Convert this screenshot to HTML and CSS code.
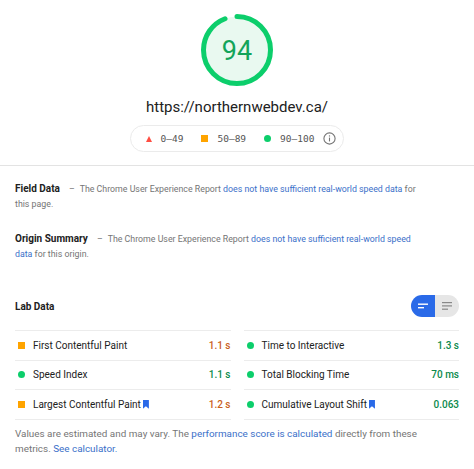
FILE: index.html
```html
<!DOCTYPE html>
<html>
<head>
    <title>PageSpeed Report</title>
    <link rel="stylesheet" href="styles.css">
</head>
<body>
    <div class="summary">
        <svg class="gauge" width="76" height="76" viewBox="0 0 76 76">
            <circle cx="38" cy="38" r="33.5" fill="#e9f9f0"/>
            <circle cx="38" cy="38" r="33.5" fill="none" stroke="#0cce6b" stroke-width="5"
                    stroke-linecap="round" stroke-dasharray="197.9 210.5" transform="rotate(-90 38 38)"/>
            <text x="38" y="47.5" text-anchor="middle" class="gauge-score">94</text>
        </svg>
        <div class="url">https://northernwebdev.ca/</div>
        <div class="legend">
            <span class="legend-item"><span class="shape triangle"></span>0–49</span>
            <span class="legend-item"><span class="shape square"></span>50–89</span>
            <span class="legend-item"><span class="shape dot"></span>90–100</span>
            <svg class="info" width="13" height="13" viewBox="0 0 13 13">
                <circle cx="6.5" cy="6.5" r="5.6" fill="none" stroke="#757575" stroke-width="1.1"/>
                <rect x="5.95" y="5.6" width="1.1" height="3.8" fill="#757575"/>
                <circle cx="6.5" cy="3.9" r="0.7" fill="#757575"/>
            </svg>
        </div>
    </div>

    <div class="content">
        <div class="field-block">
            <span class="block-title">Field Data</span><span class="dash">–</span>The Chrome User Experience Report <a href="#">does not have sufficient real-world speed data</a> for this page.
        </div>

        <div class="field-block origin">
            <span class="block-title">Origin Summary</span><span class="dash">–</span>The Chrome User Experience Report <a href="#">does not have sufficient real-world speed data</a> for this origin.
        </div>

        <div class="lab-header">
            <span class="block-title">Lab Data</span>
            <div class="toggle">
                <span class="toggle-half active">
                    <svg width="12" height="8" viewBox="0 0 12 8">
                        <rect x="1" y="1.5" width="10" height="1.4" fill="#fff"/>
                        <rect x="1" y="5" width="6" height="1.4" fill="#fff"/>
                    </svg>
                </span>
                <span class="toggle-half">
                    <svg width="12" height="10" viewBox="0 0 12 10">
                        <rect x="1" y="1" width="10" height="1.2" fill="#888"/>
                        <rect x="1" y="4.3" width="10" height="1.2" fill="#888"/>
                        <rect x="1" y="7.6" width="6" height="1.2" fill="#888"/>
                    </svg>
                </span>
            </div>
        </div>

        <div class="metrics">
            <div class="metric-col">
                <div class="metric">
                    <span class="shape square"></span>
                    <span class="metric-name">First Contentful Paint</span>
                    <span class="metric-value average">1.1 s</span>
                </div>
                <div class="metric">
                    <span class="shape dot"></span>
                    <span class="metric-name">Speed Index</span>
                    <span class="metric-value pass">1.1 s</span>
                </div>
                <div class="metric">
                    <span class="shape square"></span>
                    <span class="metric-name">Largest Contentful Paint<span class="flag"></span></span>
                    <span class="metric-value average">1.2 s</span>
                </div>
            </div>
            <div class="metric-col">
                <div class="metric">
                    <span class="shape dot"></span>
                    <span class="metric-name">Time to Interactive</span>
                    <span class="metric-value pass">1.3 s</span>
                </div>
                <div class="metric">
                    <span class="shape dot"></span>
                    <span class="metric-name">Total Blocking Time</span>
                    <span class="metric-value pass">70 ms</span>
                </div>
                <div class="metric">
                    <span class="shape dot"></span>
                    <span class="metric-name">Cumulative Layout Shift<span class="flag"></span></span>
                    <span class="metric-value pass">0.063</span>
                </div>
            </div>
        </div>

        <p class="note">
            Values are estimated and may vary. The <a href="#">performance score is calculated</a> directly from these metrics. <a href="#">See calculator.</a>
        </p>
    </div>
</body>
</html>
```

FILE: styles.css
```css
body {
    margin: 0;
    font-family: Roboto, 'Liberation Sans', sans-serif;
    background: #fff;
    color: #212121;
}

a {
    color: #3a6fc9;
    text-decoration: none;
}

.summary {
    display: flex;
    flex-direction: column;
    align-items: center;
    padding-top: 12px;
    border-bottom: 1px solid #e3e3e3;
    padding-bottom: 13px;
}

.gauge {
    display: block;
}

.gauge-score {
    font-family: Roboto, 'Liberation Sans', sans-serif;
    font-size: 27px;
    fill: #13a45a;
}

.url {
    margin-top: 9px;
    font-size: 15px;
    line-height: 20px;
    color: #212121;
}

.legend {
    margin-top: 8px;
    display: flex;
    align-items: center;
    gap: 18px;
    height: 25px;
    padding: 0 7px 0 15px;
    border: 1px solid #ebebeb;
    border-radius: 14px;
    font-family: 'DejaVu Sans Mono', 'Liberation Mono', monospace;
    font-size: 9.5px;
    color: #555;
}

.legend-item {
    display: flex;
    align-items: center;
    gap: 9px;
}

.shape {
    display: inline-block;
    flex-shrink: 0;
}

.triangle {
    width: 0;
    height: 0;
    border-left: 3px solid transparent;
    border-right: 3px solid transparent;
    border-bottom: 6px solid #ff4e42;
}

.square {
    width: 7px;
    height: 7px;
    background: #ffa400;
}

.dot {
    width: 7px;
    height: 7px;
    border-radius: 50%;
    background: #0cce6b;
}

.info {
    display: block;
    margin-left: -9px;
}

.content {
    padding: 0 15px;
}

.field-block {
    margin-top: 15px;
    font-size: 8.8px;
    line-height: 15px;
    color: #757575;
    padding-right: 37px;
}

.field-block.origin {
    margin-top: 19px;
}

.block-title {
    font-size: 10px;
    font-weight: bold;
    color: #212121;
}

.dash {
    margin: 0 5px 0 9px;
}

.lab-header {
    margin-top: 32px;
    display: flex;
    justify-content: space-between;
    align-items: center;
    height: 24px;
}

.toggle {
    display: flex;
    height: 22px;
    border-radius: 11px;
    overflow: hidden;
}

.toggle-half {
    width: 24px;
    display: flex;
    align-items: center;
    justify-content: center;
    background: #e6e6e6;
}

.toggle-half.active {
    background: #2a6ae8;
}

.toggle-half svg {
    display: block;
}

.metrics {
    margin-top: 12px;
    display: grid;
    grid-template-columns: 1fr 1fr;
    gap: 13px;
}

.metric {
    display: flex;
    align-items: center;
    height: 28.5px;
    border-top: 1px solid #ececec;
    font-size: 10px;
    padding: 0 0 0 3px;
}

.metric-col .metric:last-child {
    border-bottom: 1px solid #ececec;
}

.metric .shape {
    margin-right: 8px;
}

.metric-name {
    flex: 1;
    display: flex;
    align-items: center;
    color: #212121;
}

.flag {
    display: inline-block;
    width: 6px;
    height: 9px;
    margin-left: 2px;
    background: #2a6ae8;
    clip-path: polygon(0 0, 100% 0, 100% 100%, 50% 72%, 0 100%);
}

.metric-value {
    font-weight: 500;
}

.metric-value.average {
    color: #c9601c;
}

.metric-value.pass {
    color: #0b8a4c;
}

.note {
    margin: 6px 0 0;
    font-size: 9.9px;
    line-height: 15px;
    color: #757575;
    padding-right: 20px;
}
```
